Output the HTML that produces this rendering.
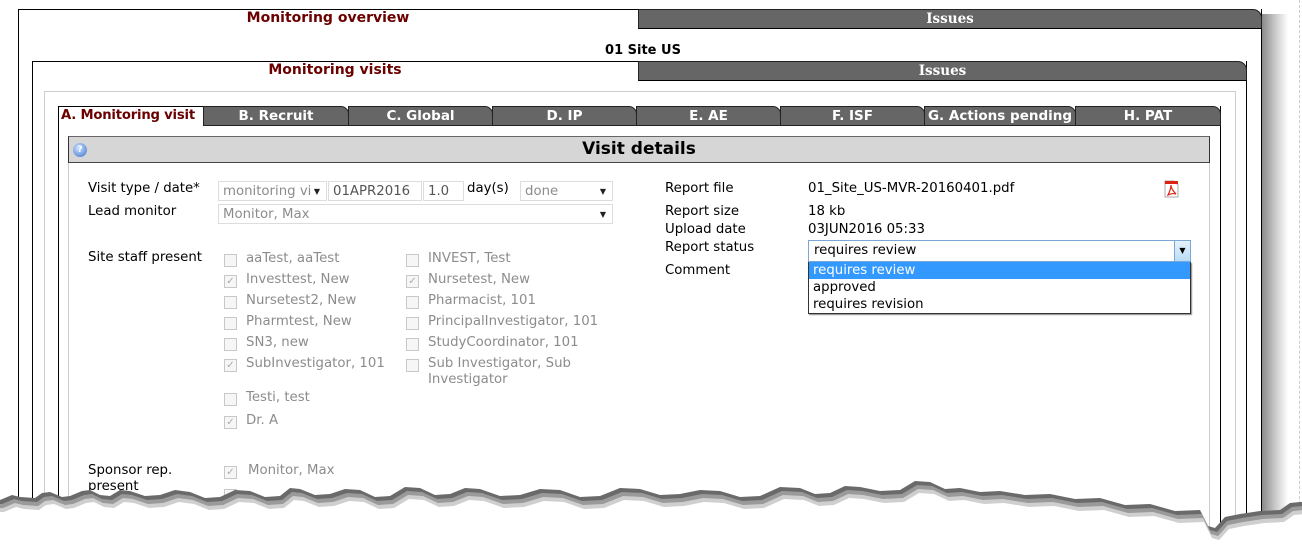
<!DOCTYPE html>
<html><head><meta charset="utf-8"><style>
*{margin:0;padding:0;box-sizing:border-box}
body{width:1302px;height:549px;background:#fff;position:relative;overflow:hidden;font-family:"DejaVu Sans",Verdana,sans-serif;font-size:13.3px;color:#000}
.a{position:absolute;white-space:nowrap}
.tabd{position:absolute;background:#666;color:#fff;font-weight:bold;text-align:center;border:1px solid #222;border-bottom:1px solid #000;border-radius:0 9px 0 0;font-family:"DejaVu Serif","Liberation Serif",serif;font-size:13.5px}
.st{position:absolute;top:106px;height:20px;background:#666;color:#fff;font-weight:bold;text-align:center;border:1px solid #222;border-radius:0 8px 0 0;font-size:13.5px;line-height:18px;white-space:nowrap;overflow:hidden}
.t{color:#8c8c8c}
.cb{position:absolute;width:13px;height:13px;border:1px solid #c8c8c8;background:#f6f6f6;font-size:10px;line-height:11px;text-align:center;color:#aaa}
.sel{position:absolute;border:1px solid #ddd;height:20px;color:#8c8c8c;padding-left:4px;line-height:19px;background:#fff;overflow:hidden;white-space:nowrap}
.sel i{position:absolute;right:6px;top:0;font-style:normal;color:#222;font-size:8px;background:#fff;padding-left:3px}
</style></head><body>
<div class="a" style="left:1262px;top:14px;width:26px;height:500px;background:linear-gradient(90deg,#8a8a8a,#c8c8c8 50%,#fff)"></div>
<div class="a" style="left:1299px;top:0;width:0;height:549px;border-left:1px dashed #ccc"></div>
<div class="a" style="left:18px;top:9px;width:1244px;height:520px;border:1px solid #000;border-top:none;background:#fff"></div>
<div class="a" style="left:18px;top:9px;width:621px;height:1px;background:#000"></div>
<div class="a" style="left:18px;top:10px;width:620px;text-align:center;color:#6b0000;font-weight:bold;font-size:14px">Monitoring overview</div>
<div class="tabd" style="left:638px;top:9px;width:624px;height:20px;line-height:18px">Issues</div>
<div class="a" style="left:0;top:43px;width:1286px;text-align:center;font-weight:bold;font-size:13px">01 Site US</div>
<div class="a" style="left:32px;top:61px;width:1215px;height:470px;border:1px solid #000;border-top:none"></div>
<div class="a" style="left:32px;top:61px;width:607px;height:1px;background:#000"></div>
<div class="a" style="left:32px;top:62px;width:606px;text-align:center;color:#6b0000;font-weight:bold;font-size:14px">Monitoring visits</div>
<div class="tabd" style="left:638px;top:61px;width:609px;height:20px;line-height:18px">Issues</div>
<div class="a" style="left:44px;top:91px;width:1192px;height:440px;border:1px solid #ccc;border-bottom:none"></div>
<div class="a" style="left:58px;top:106px;width:1163px;height:425px;border:1px solid #000;border-top:none"></div>
<div class="a" style="left:58px;top:106px;width:146px;height:1px;background:#000"></div>
<div class="a" style="left:61px;top:108px;font-weight:bold;color:#6b0000;font-size:13.2px;letter-spacing:-0.2px">A. Monitoring visit</div>
<div class="st" style="left:203px;width:146px">B. Recruit</div>
<div class="st" style="left:348px;width:145px">C. Global</div>
<div class="st" style="left:492px;width:145px">D. IP</div>
<div class="st" style="left:636px;width:145px">E. AE</div>
<div class="st" style="left:780px;width:145px">F. ISF</div>
<div class="st" style="left:924px;width:152px">G. Actions pending</div>
<div class="st" style="left:1075px;width:146px">H. PAT</div>
<div class="a" style="left:68px;top:137px;width:1142px;height:394px;border-right:1px solid #ccc;border-left:1px solid #ccc"></div>
<div class="a" style="left:68px;top:136px;width:1142px;height:27px;background:#d6d6d6;border:1px solid #333;border-top-color:#666;border-bottom-color:#444;text-align:center;font-weight:bold;font-size:17px;line-height:25px">Visit details</div>
<div class="a" style="left:73px;top:143px;width:14px;height:14px;border-radius:50%;background:radial-gradient(circle at 40% 35%,#cfe3ff,#3a72c8);color:#fff;font-size:9px;line-height:14px;text-align:center;font-weight:bold">?</div>
<div class="a" style="left:88px;top:181px">Visit type / date*</div>
<div class="sel" style="left:218px;top:181px;width:109px">monitoring vi:<i>▼</i></div>
<div class="sel" style="left:328px;top:181px;width:94px;color:#555">01APR2016</div>
<div class="sel" style="left:423px;top:181px;width:41px;color:#555">1.0</div>
<div class="a" style="left:467px;top:181px">day(s)</div>
<div class="sel" style="left:520px;top:181px;width:93px">done<i>▼</i></div>
<div class="a" style="left:88px;top:204px">Lead monitor</div>
<div class="sel" style="left:218px;top:204px;width:395px">Monitor, Max<i>▼</i></div>
<div class="a" style="left:88px;top:250px">Site staff present</div>
<div class="cb" style="left:224px;top:254px"></div><div class="a t" style="left:246px;top:251px">aaTest, aaTest</div>
<div class="cb" style="left:224px;top:275px">✓</div><div class="a t" style="left:246px;top:272px">Investtest, New</div>
<div class="cb" style="left:224px;top:296px"></div><div class="a t" style="left:246px;top:293px">Nursetest2, New</div>
<div class="cb" style="left:224px;top:317px"></div><div class="a t" style="left:246px;top:314px">Pharmtest, New</div>
<div class="cb" style="left:224px;top:338px"></div><div class="a t" style="left:246px;top:335px">SN3, new</div>
<div class="cb" style="left:224px;top:359px">✓</div><div class="a t" style="left:246px;top:356px">SubInvestigator, 101</div>
<div class="cb" style="left:224px;top:393px"></div><div class="a t" style="left:246px;top:390px">Testi, test</div>
<div class="cb" style="left:224px;top:416px">✓</div><div class="a t" style="left:246px;top:413px">Dr. A</div>
<div class="cb" style="left:406px;top:254px"></div><div class="a t" style="left:428px;top:251px">INVEST, Test</div>
<div class="cb" style="left:406px;top:275px">✓</div><div class="a t" style="left:428px;top:272px">Nursetest, New</div>
<div class="cb" style="left:406px;top:296px"></div><div class="a t" style="left:428px;top:293px">Pharmacist, 101</div>
<div class="cb" style="left:406px;top:317px"></div><div class="a t" style="left:428px;top:314px">PrincipalInvestigator, 101</div>
<div class="cb" style="left:406px;top:338px"></div><div class="a t" style="left:428px;top:335px">StudyCoordinator, 101</div>
<div class="cb" style="left:406px;top:359px"></div><div class="a t" style="left:428px;top:356px;line-height:16px">Sub Investigator, Sub<br>Investigator</div>
<div class="a" style="left:88px;top:463px;line-height:16px">Sponsor rep.<br>present</div>
<div class="cb" style="left:224px;top:466px">✓</div><div class="a t" style="left:248px;top:463px">Monitor, Max</div>
<div class="cb" style="left:224px;top:489px"></div>
<div class="a" style="left:665px;top:181px">Report file</div>
<div class="a" style="left:808px;top:181px">01_Site_US-MVR-20160401.pdf</div>
<svg class="a" style="left:1163px;top:180px" width="17" height="18" viewBox="0 0 17 18"><path d="M2 1h9l4 4v12H2z" fill="#fff" stroke="#aaa"/><rect x="2" y="1" width="13" height="3" fill="#d21"/><path d="M5 15c2-4 3-7 3-10 0 3 2 6 5 9-3-1-6 0-8 1z" fill="none" stroke="#d21" stroke-width="1.2"/></svg>
<div class="a" style="left:665px;top:204px">Report size</div>
<div class="a" style="left:808px;top:204px">18 kb</div>
<div class="a" style="left:665px;top:222px">Upload date</div>
<div class="a" style="left:808px;top:222px">03JUN2016 05:33</div>
<div class="a" style="left:665px;top:240px">Report status</div>
<div class="a" style="left:808px;top:240px;width:383px;height:22px;border:1px solid #7aa7d6;background:#fff;padding-left:5px;line-height:20px">requires review
<div class="a" style="right:0;top:0;width:16px;height:20px;background:linear-gradient(#e6f2fc,#b8dcf5);border-left:1px solid #7aa7d6;font-size:8px;text-align:center;line-height:20px">▼</div></div>
<div class="a" style="left:665px;top:263px">Comment</div>
<div class="a" style="left:808px;top:262px;width:383px;height:52px;border:1px solid #333;border-top:none;background:#fff;box-shadow:1px 1px 1px #888;line-height:17px">
<div style="background:#3399ff;color:#fff;padding-left:4px">requires review</div>
<div style="padding-left:4px">approved</div>
<div style="padding-left:4px">requires revision</div></div>
<svg class="a" style="left:0;top:470px" width="1302" height="79" viewBox="0 0 1302 79">
<defs><path id="e" d="M-10 90 L-10 30 L0 30 L12 25 L20 27 L35 28 L42 23 L50 22 L62 27 L70 26 L82 21 L90 20 L100 25 L110 26 L120 20 L130 21 L145 26 L160 25 L175 20 L190 22 L205 28 L220 27 L235 20 L250 21 L265 27 L280 26 L290 18 L300 19 L315 25 L330 24 L345 19 L360 20 L375 27 L390 26 L405 17 L420 18 L435 25 L450 24 L465 18 L480 19 L500 26 L520 25 L540 19 L560 20 L580 27 L600 26 L620 18 L640 19 L660 25 L680 24 L700 20 L720 21 L740 27 L760 26 L780 17 L800 18 L815 24 L830 23 L845 16 L860 17 L880 21 L900 20 L915 11 L930 12 L945 19 L960 18 L980 22 L1000 21 L1025 25 L1050 24 L1075 29 L1100 28 L1125 35 L1150 34 L1175 41 L1200 40 L1208 56 L1215 58 L1225 47 L1240 44 L1260 41 L1280 40 L1290 33 L1300 32 L1312 32 L1312 90 Z"/></defs>
<use href="#e" fill="#6a6a6a"/>
<use href="#e" fill="#9a9a9a" transform="translate(2,4)"/>
<use href="#e" fill="#cfcfcf" transform="translate(3,8)"/>
<use href="#e" fill="#fff" transform="translate(4,12)"/>
</svg>
</body></html>
